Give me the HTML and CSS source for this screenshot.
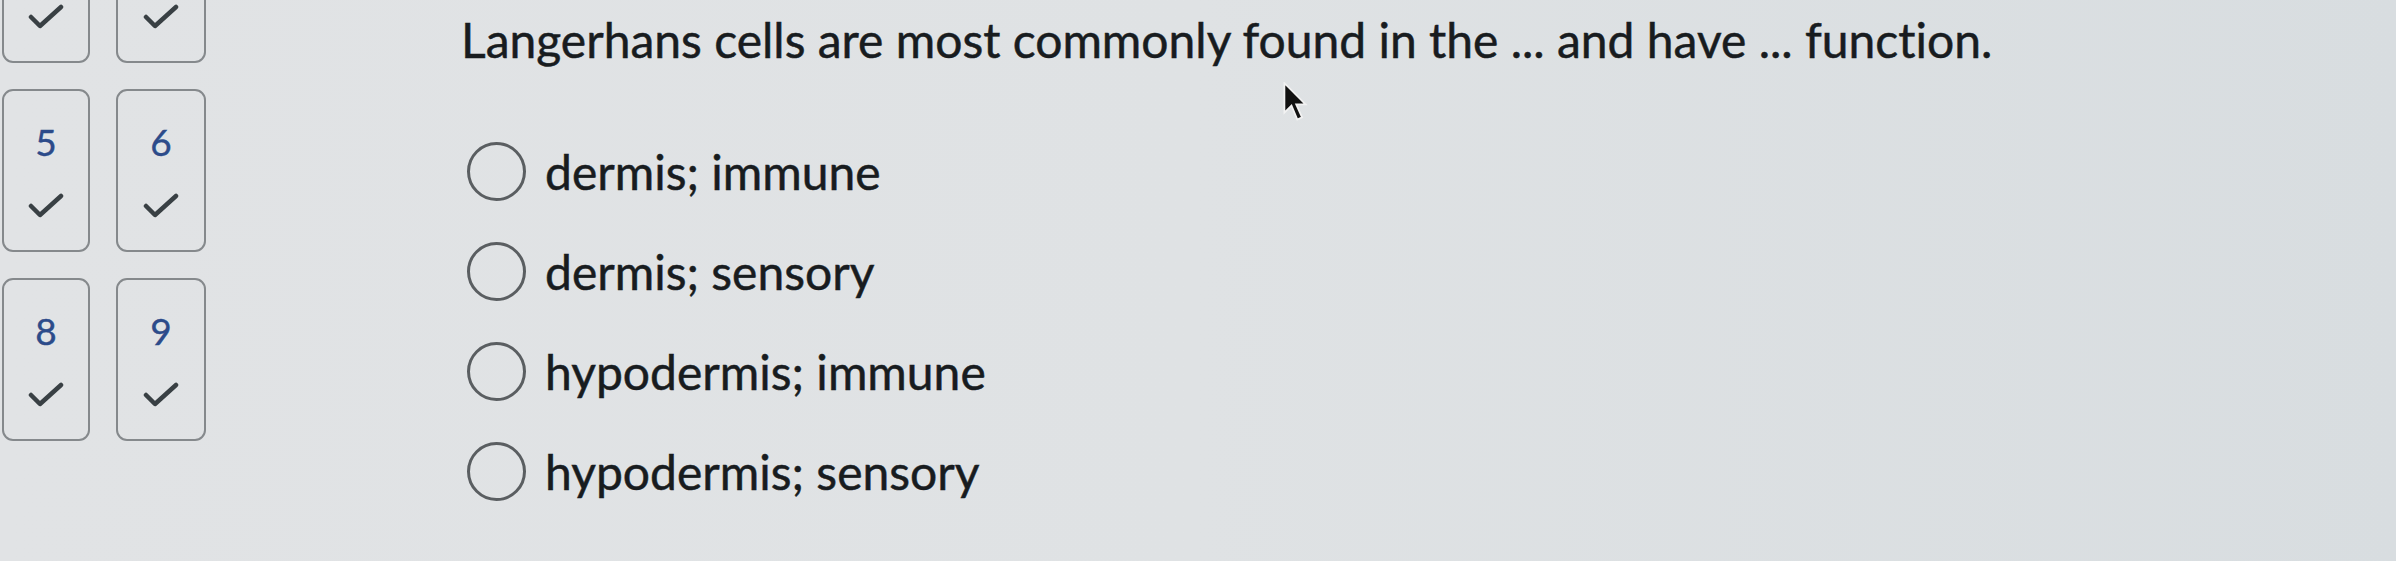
FILE: index.html
```html
<!DOCTYPE html>
<html lang="en">
<head>
    <meta charset="UTF-8">
    <title>Quiz</title>
    <link rel="stylesheet" href="styles.css">
</head>
<body>

<div class="page">
    <!-- question navigator -->
    <div class="nav_grid">
        <div class="nav_tile"><span class="nav_num">2</span><svg class="tick" viewBox="0 0 36 26"><path d="M3 13 L12 22 L33 3"/></svg></div>
        <div class="nav_tile"><span class="nav_num">3</span><svg class="tick" viewBox="0 0 36 26"><path d="M3 13 L12 22 L33 3"/></svg></div>
        <div class="nav_tile"><span class="nav_num">5</span><svg class="tick" viewBox="0 0 36 26"><path d="M3 13 L12 22 L33 3"/></svg></div>
        <div class="nav_tile"><span class="nav_num">6</span><svg class="tick" viewBox="0 0 36 26"><path d="M3 13 L12 22 L33 3"/></svg></div>
        <div class="nav_tile"><span class="nav_num">8</span><svg class="tick" viewBox="0 0 36 26"><path d="M3 13 L12 22 L33 3"/></svg></div>
        <div class="nav_tile"><span class="nav_num">9</span><svg class="tick" viewBox="0 0 36 26"><path d="M3 13 L12 22 L33 3"/></svg></div>
    </div>

    <div class="question">
        <p class="question_text">Langerhans cells are most commonly found in the ... and have ... function.</p>

        <div class="answers">
            <label class="answer"><span class="radio"></span>dermis; immune</label>
            <label class="answer"><span class="radio"></span>dermis; sensory</label>
            <label class="answer"><span class="radio"></span>hypodermis; immune</label>
            <label class="answer"><span class="radio"></span>hypodermis; sensory</label>
        </div>
    </div>
</div>

<!-- mouse pointer -->
<svg class="pointer" viewBox="0 0 22 34"><path d="M2 1 L2 26 L8 20 L13 32 L17 30 L12 19 L20 19 Z"/></svg>

</body>
</html>
```

FILE: styles.css
```css
body {
    margin: 0;
    height: 561px;
    overflow: hidden;
    background: linear-gradient(90deg, #e1e3e5 0%, #dfe2e4 50%, #d8dde0 100%);
    font-family: Lato, "Liberation Sans", sans-serif;
    font-variant-ligatures: none;
}

.page {
    display: flex;
    align-items: flex-start;
}

.nav_grid {
    display: grid;
    grid-template-columns: 88px 90px;
    column-gap: 26px;
    row-gap: 26px;
    margin-top: -100px;
    margin-left: 2px;
}

.nav_tile {
    height: 159px;
    border: 2px solid #85898c;
    border-radius: 11px;
    display: flex;
    flex-direction: column;
    align-items: center;
}

.nav_num {
    margin-top: 31px;
    font-size: 37px;
    line-height: 40px;
    color: #2c4b8a;
    -webkit-text-stroke: 0.4px #2c4b8a;
}

.tick {
    width: 36px;
    height: 26px;
    margin-top: 31px;
}

.tick path {
    fill: none;
    stroke: #394044;
    stroke-width: 4.5;
    stroke-linecap: round;
    stroke-linejoin: round;
}

.question {
    margin-left: 255px;
    padding-top: 12px;
}

.question_text {
    margin: 0;
    font-size: 48px;
    line-height: 56px;
    color: #181c1f;
    -webkit-text-stroke: 0.5px #181c1f;
    white-space: nowrap;
}

.answers {
    margin-top: 53px;
    margin-left: 6px;
}

.answer {
    display: flex;
    align-items: center;
    height: 100px;
    font-size: 48px;
    color: #181c1f;
    -webkit-text-stroke: 0.5px #181c1f;
}

.radio {
    width: 53px;
    height: 53px;
    border: 3px solid #5a5e61;
    border-radius: 50%;
    margin-right: 19px;
    flex: none;
}

.pointer {
    position: absolute;
    left: 1282px;
    top: 82px;
    width: 26px;
    height: 40px;
}

.pointer path {
    fill: #111;
    stroke: #f2f2f2;
    stroke-width: 1.5;
}
```
